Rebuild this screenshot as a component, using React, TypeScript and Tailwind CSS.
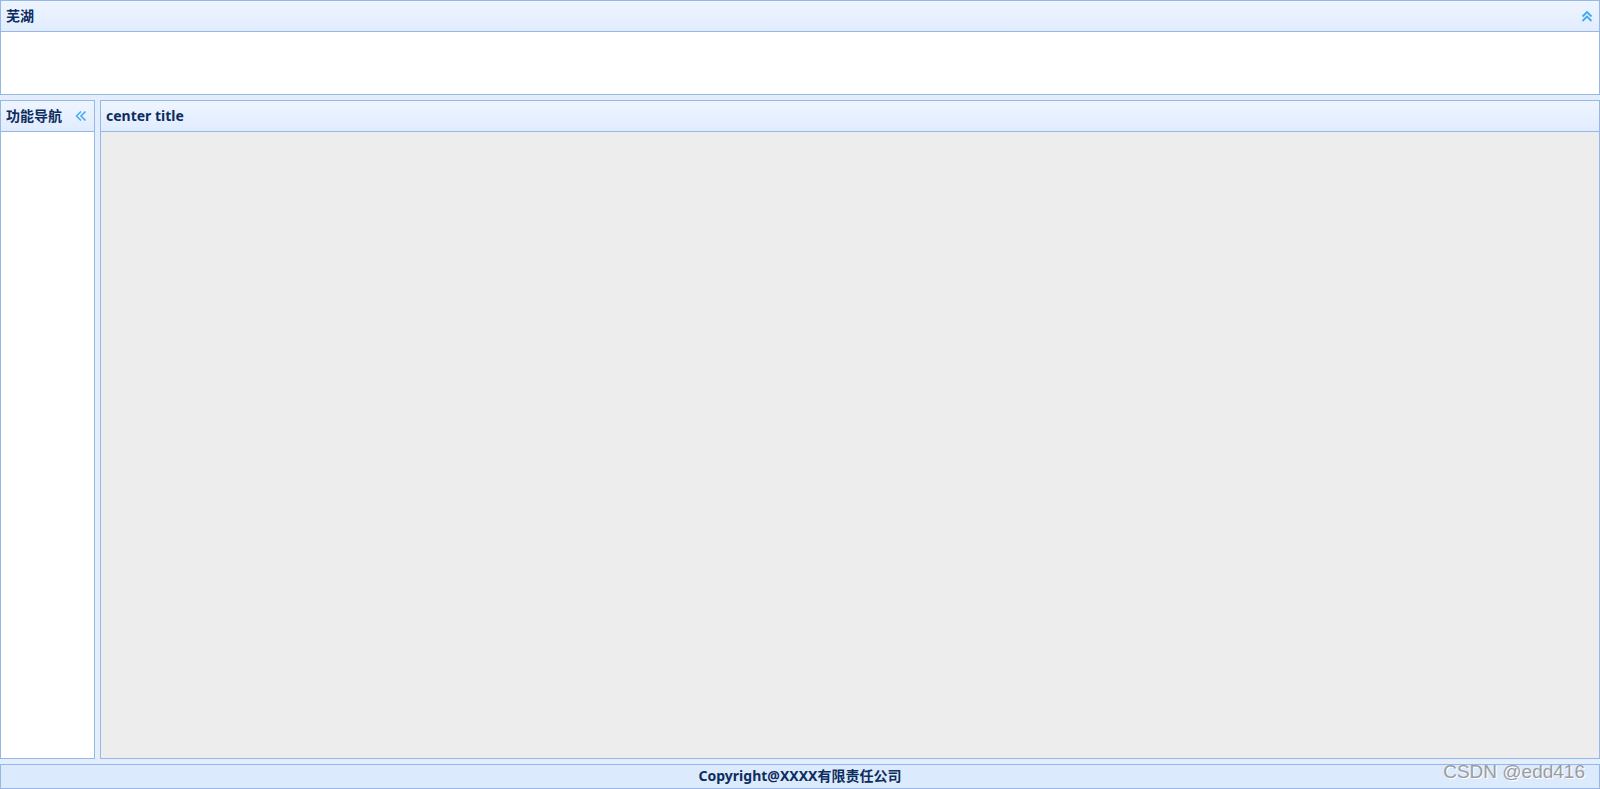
import React from "react";

const font = { fontFamily: '"Microsoft YaHei", "Noto Sans", "Noto Sans CJK SC", sans-serif' };

const DoubleUp = () => (
  <svg width="12" height="12" viewBox="0 0 12 12" fill="none" stroke="#41a8f2" strokeWidth="1.8">
    <path d="M1.5 6.5 L6 2 L10.5 6.5" />
    <path d="M1.5 11 L6 6.5 L10.5 11" />
  </svg>
);

const DoubleLeft = () => (
  <svg width="12" height="12" viewBox="0 0 12 12" fill="none" stroke="#41a8f2" strokeWidth="1.5">
    <path d="M6 1.5 L1.5 6 L6 10.5" />
    <path d="M10.5 1.5 L6 6 L10.5 10.5" />
  </svg>
);

const Header = ({ title, children }: { title: string; children?: React.ReactNode }) => (
  <div className="h-[31px] shrink-0 flex items-center justify-between px-[5px] border-b border-[#95B8E7] bg-gradient-to-b from-[#eff5ff] to-[#e0ecff]">
    <span className="text-[14px] font-bold text-[#0e2d5f] leading-none">{title}</span>
    {children}
  </div>
);

export default function App() {
  return (
    <div className="w-[1600px] h-[789px] flex flex-col gap-[5px] bg-[#e3edfb] relative" style={font}>
      {/* north */}
      <div className="h-[95px] shrink-0 flex flex-col border border-[#95B8E7] bg-white">
        <Header title="芜湖">
          <span className="mr-[1px]">
            <DoubleUp />
          </span>
        </Header>
        <div className="flex-1 bg-white" />
      </div>

      {/* middle */}
      <div className="flex-1 flex gap-[5px] min-h-0">
        <div className="w-[95px] shrink-0 flex flex-col border border-[#95B8E7] bg-white">
          <Header title="功能导航">
            <span className="mr-[2px]">
              <DoubleLeft />
            </span>
          </Header>
          <div className="flex-1 bg-white" />
        </div>
        <div className="flex-1 flex flex-col border border-[#95B8E7]">
          <Header title="center title" />
          <div className="flex-1 bg-[#ededed]" />
        </div>
      </div>

      {/* south */}
      <div className="h-[25px] shrink-0 flex items-center justify-center pb-[2px] border border-[#95B8E7] bg-[#dbeafd]">
        <span className="text-[14px] font-bold text-[#0e2d5f] leading-none">Copyright@XXXX有限责任公司</span>
      </div>

      <div
        className="absolute right-[15px] top-[762px] text-[19px] text-[#9c9c9c] leading-none"
        style={{ fontFamily: '"Liberation Sans", Arial, sans-serif', textShadow: "1px 1px 0 #ffffff" }}
      >
        CSDN @edd416
      </div>
    </div>
  );
}
